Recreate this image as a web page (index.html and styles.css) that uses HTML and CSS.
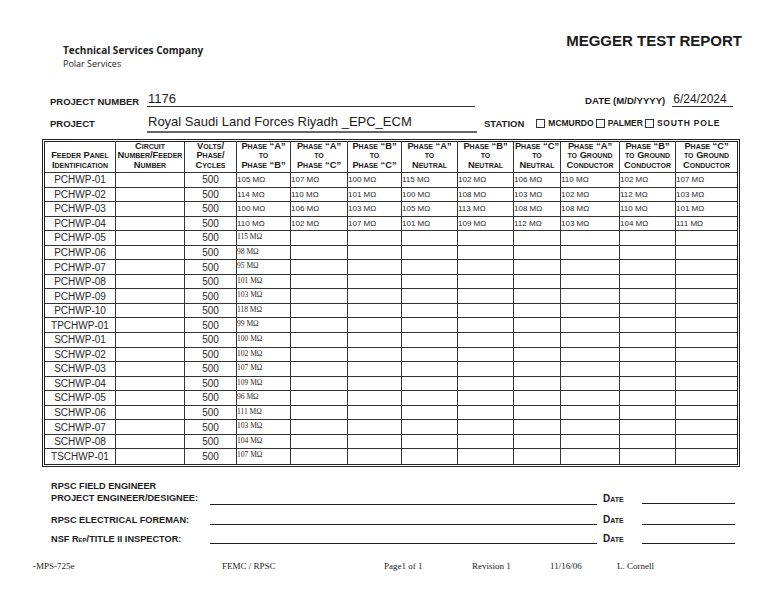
FILE: index.html
```html
<!DOCTYPE html>
<html lang="en">
<head>
<meta charset="utf-8">
<title>Megger Test Report</title>
<link rel="stylesheet" href="styles.css">
</head>
<body>
<div class="page">
  <header class="top">
    <div class="brand">
      <div class="brand-name">Technical Services Company</div>
      <div class="brand-sub">Polar Services</div>
    </div>
    <h1 class="title">MEGGER TEST REPORT</h1>
  </header>

  <section class="meta">
    <div class="meta-row row-number">
      <span class="label lbl-w">PROJECT NUMBER</span>
      <span class="field field-project">1176</span>
      <span class="label date-label">DATE (M/D/YYYY)</span>
      <span class="field field-date">6/24/2024</span>
    </div>
    <div class="meta-row row-project">
      <span class="label lbl-w">PROJECT</span>
      <span class="field field-project">Royal Saudi Land Forces Riyadh _EPC_ECM</span>
      <span class="label station">STATION</span>
      <span class="opt"><span class="box"></span>MCMURDO</span>
      <span class="opt"><span class="box"></span>PALMER</span>
      <span class="opt opt-wide"><span class="box"></span>SOUTH POLE</span>
    </div>
  </section>

  <table class="sheet">
    <thead>
      <tr>
        <th>Feeder Panel<br>Identification</th>
        <th>Circuit<br>Number/Feeder<br>Number</th>
        <th>Volts/<br>Phase/<br>Cycles</th>
        <th>Phase “A”<br>to<br>Phase “B”</th>
        <th>Phase “A”<br>to<br>Phase “C”</th>
        <th>Phase “B”<br>to<br>Phase “C”</th>
        <th>Phase “A”<br>to<br>Neutral</th>
        <th>Phase “B”<br>to<br>Neutral</th>
        <th>Phase “C”<br>to<br>Neutral</th>
        <th>Phase “A”<br>to Ground<br>Conductor</th>
        <th>Phase “B”<br>to Ground<br>Conductor</th>
        <th>Phase “C”<br>to Ground<br>Conductor</th>
      </tr>
    </thead>
    <tbody>
      <tr><td class="name">PCHWP-01</td><td></td><td class="volt">500</td><td class="mo">105 MΩ</td><td class="mo">107 MΩ</td><td class="mo">100 MΩ</td><td class="mo">115 MΩ</td><td class="mo">102 MΩ</td><td class="mo">106 MΩ</td><td class="mo">110 MΩ</td><td class="mo">102 MΩ</td><td class="mo">107 MΩ</td></tr>
      <tr><td class="name">PCHWP-02</td><td></td><td class="volt">500</td><td class="mo">114 MΩ</td><td class="mo">110 MΩ</td><td class="mo">101 MΩ</td><td class="mo">100 MΩ</td><td class="mo">108 MΩ</td><td class="mo">103 MΩ</td><td class="mo">102 MΩ</td><td class="mo">112 MΩ</td><td class="mo">103 MΩ</td></tr>
      <tr><td class="name">PCHWP-03</td><td></td><td class="volt">500</td><td class="mo">100 MΩ</td><td class="mo">106 MΩ</td><td class="mo">103 MΩ</td><td class="mo">105 MΩ</td><td class="mo">113 MΩ</td><td class="mo">108 MΩ</td><td class="mo">108 MΩ</td><td class="mo">110 MΩ</td><td class="mo">101 MΩ</td></tr>
      <tr><td class="name">PCHWP-04</td><td></td><td class="volt">500</td><td class="mo">110 MΩ</td><td class="mo">102 MΩ</td><td class="mo">107 MΩ</td><td class="mo">101 MΩ</td><td class="mo">109 MΩ</td><td class="mo">112 MΩ</td><td class="mo">103 MΩ</td><td class="mo">104 MΩ</td><td class="mo">111 MΩ</td></tr>
      <tr><td class="name">PCHWP-05</td><td></td><td class="volt">500</td><td class="ms">115 MΩ</td><td></td><td></td><td></td><td></td><td></td><td></td><td></td><td></td></tr>
      <tr><td class="name">PCHWP-06</td><td></td><td class="volt">500</td><td class="ms">98 MΩ</td><td></td><td></td><td></td><td></td><td></td><td></td><td></td><td></td></tr>
      <tr><td class="name">PCHWP-07</td><td></td><td class="volt">500</td><td class="ms">95 MΩ</td><td></td><td></td><td></td><td></td><td></td><td></td><td></td><td></td></tr>
      <tr><td class="name">PCHWP-08</td><td></td><td class="volt">500</td><td class="ms">101 MΩ</td><td></td><td></td><td></td><td></td><td></td><td></td><td></td><td></td></tr>
      <tr><td class="name">PCHWP-09</td><td></td><td class="volt">500</td><td class="ms">103 MΩ</td><td></td><td></td><td></td><td></td><td></td><td></td><td></td><td></td></tr>
      <tr><td class="name">PCHWP-10</td><td></td><td class="volt">500</td><td class="ms">118 MΩ</td><td></td><td></td><td></td><td></td><td></td><td></td><td></td><td></td></tr>
      <tr><td class="name">TPCHWP-01</td><td></td><td class="volt">500</td><td class="ms">99 MΩ</td><td></td><td></td><td></td><td></td><td></td><td></td><td></td><td></td></tr>
      <tr><td class="name">SCHWP-01</td><td></td><td class="volt">500</td><td class="ms">100 MΩ</td><td></td><td></td><td></td><td></td><td></td><td></td><td></td><td></td></tr>
      <tr><td class="name">SCHWP-02</td><td></td><td class="volt">500</td><td class="ms">102 MΩ</td><td></td><td></td><td></td><td></td><td></td><td></td><td></td><td></td></tr>
      <tr><td class="name">SCHWP-03</td><td></td><td class="volt">500</td><td class="ms">107 MΩ</td><td></td><td></td><td></td><td></td><td></td><td></td><td></td><td></td></tr>
      <tr><td class="name">SCHWP-04</td><td></td><td class="volt">500</td><td class="ms">109 MΩ</td><td></td><td></td><td></td><td></td><td></td><td></td><td></td><td></td></tr>
      <tr><td class="name">SCHWP-05</td><td></td><td class="volt">500</td><td class="ms">96 MΩ</td><td></td><td></td><td></td><td></td><td></td><td></td><td></td><td></td></tr>
      <tr><td class="name">SCHWP-06</td><td></td><td class="volt">500</td><td class="ms">111 MΩ</td><td></td><td></td><td></td><td></td><td></td><td></td><td></td><td></td></tr>
      <tr><td class="name">SCHWP-07</td><td></td><td class="volt">500</td><td class="ms">103 MΩ</td><td></td><td></td><td></td><td></td><td></td><td></td><td></td><td></td></tr>
      <tr><td class="name">SCHWP-08</td><td></td><td class="volt">500</td><td class="ms">104 MΩ</td><td></td><td></td><td></td><td></td><td></td><td></td><td></td><td></td></tr>
      <tr><td class="name">TSCHWP-01</td><td></td><td class="volt">500</td><td class="ms">107 MΩ</td><td></td><td></td><td></td><td></td><td></td><td></td><td></td><td></td></tr>
    </tbody>
  </table>

  <section class="sign">
    <div class="sign-row row-a">
      <div class="sign-label">RPSC FIELD ENGINEER<br>PROJECT ENGINEER/DESIGNEE:</div>
      <div class="sign-line"></div>
      <div class="sign-date">Date</div>
      <div class="sign-date-line"></div>
    </div>
    <div class="sign-row row-b">
      <div class="sign-label">RPSC ELECTRICAL FOREMAN:</div>
      <div class="sign-line"></div>
      <div class="sign-date">Date</div>
      <div class="sign-date-line"></div>
    </div>
    <div class="sign-row row-c">
      <div class="sign-label">NSF <span class="sc">Rep</span>/TITLE II INSPECTOR:</div>
      <div class="sign-line"></div>
      <div class="sign-date">Date</div>
      <div class="sign-date-line"></div>
    </div>
  </section>

  <footer class="footer">
    <span>-MPS-725e</span>
    <span>FEMC / RPSC</span>
    <span>Page1 of 1</span>
    <span>Revision 1</span>
    <span>11/16/06</span>
    <span>L. Cornell</span>
  </footer>
</div>
</body>
</html>
```

FILE: styles.css
```css
* { box-sizing: border-box; }
html, body { margin: 0; padding: 0; background: #fff; }
body {
  font-family: "Liberation Sans", Arial, sans-serif;
  color: #1c1c1c;
  width: 768px;
  height: 594px;
  overflow: hidden;
}

/* ---- top ---- */
.top {
  display: flex;
  justify-content: space-between;
  align-items: flex-start;
  padding: 33px 26px 0 63px;
}
.brand {
  margin-top: 11px;
  font-family: "Open Sans", sans-serif;
  line-height: 13px;
  color: #1e1e1e;
}
.brand-name { font-size: 10px; font-weight: 700; }
.brand-sub { font-size: 9px; }
.title {
  margin: 0;
  font-size: 15px;
  line-height: 16px;
  font-weight: 700;
  color: #1a1a1a;
}

/* ---- meta ---- */
.meta { margin-top: 17px; padding-left: 50px; }
.meta-row { display: flex; align-items: flex-end; height: 20px; }
.row-project { margin-top: 6px; }
.label {
  font-weight: 700;
  font-size: 9.5px;
  line-height: 11px;
  white-space: nowrap;
}
.lbl-w { width: 97px; }
.row-project .label { margin-bottom: 4px; }
.field {
  font-size: 13px;
  line-height: 15px;
  border-bottom: 1.5px solid #333;
  padding-left: 1px;
  white-space: nowrap;
}
.field-project { width: 328px; }
.row-project .field-project {
  width: 330px;
  border-bottom: 2px solid #666;
  padding-bottom: 2px;
}
.date-label { margin-left: 110px; font-size: 9.6px; margin-bottom: 1.5px; }
.field-date {
  margin-left: 7px;
  width: 61px;
  font-size: 12px;
  line-height: 14px;
}
.station { margin-left: 7px; margin-right: 12px; }
.opt {
  display: flex;
  align-items: center;
  font-weight: 700;
  font-size: 8.5px;
  line-height: 10px;
  margin-right: 2px;
  margin-bottom: 5px;
  white-space: nowrap;
}
.opt-wide { letter-spacing: 0.8px; }
.box {
  width: 9px;
  height: 9px;
  border: 1px solid #333;
  margin-right: 3px;
}

/* ---- table ---- */
.sheet {
  margin: 6px 0 0 42px;
  width: 698px;
  border: 3px double #222;
  border-spacing: 0;
  border-collapse: separate;
  table-layout: fixed;
}
.sheet th, .sheet td {
  border-right: 1px solid #333;
  border-bottom: 1px solid #333;
  padding: 0;
  overflow: hidden;
  white-space: nowrap;
}
.sheet tr > :last-child { border-right: none; }
.sheet tbody tr:last-child td { border-bottom: none; }

.sheet thead tr { height: 31px; }
.sheet th {
  font-size: 9.3px;
  line-height: 9.3px;
  font-weight: 700;
  font-variant: small-caps;
  text-align: center;
  vertical-align: bottom;
  padding-bottom: 2px;
  color: #1a1a1a;
}
.sheet th:nth-child(1) { width: 71px; }
.sheet th:nth-child(2) { width: 69px; }
.sheet th:nth-child(3) { width: 52px; }
.sheet th:nth-child(4) { width: 54px; }
.sheet th:nth-child(5) { width: 57px; }
.sheet th:nth-child(6) { width: 54px; }
.sheet th:nth-child(7) { width: 56px; }
.sheet th:nth-child(8) { width: 56px; }
.sheet th:nth-child(9) { width: 47px; }
.sheet th:nth-child(10) { width: 59px; }
.sheet th:nth-child(11) { width: 56px; }
.sheet th:nth-child(12) { width: 61px; }

.sheet tbody tr { height: 14.55px; }
.sheet td { line-height: 11px; color: #2a2a2a; }
.name, .volt { font-size: 10px; text-align: center; }
.mo { font-size: 8px; padding-left: 1px; }
.ms {
  font-family: "Liberation Serif", "Times New Roman", serif;
  font-size: 7.5px;
  line-height: 9px;
  vertical-align: top;
  padding-left: 1px;
}

/* ---- signatures ---- */
.sign { margin-top: 13px; padding-left: 51px; }
.sign-row { display: flex; align-items: flex-end; }
.row-b { margin-top: 9px; }
.row-c { margin-top: 7px; }
.sign-label {
  width: 159px;
  font-weight: 700;
  font-size: 9.2px;
  line-height: 12px;
  white-space: nowrap;
}
.row-a .sign-label { margin-bottom: 1px; }
.sc { font-variant: small-caps; }
.sign-line { width: 387px; border-bottom: 1.5px solid #222; }
.row-b .sign-line, .row-c .sign-line,
.row-b .sign-date-line, .row-c .sign-date-line { margin-bottom: 1px; }
.sign-date {
  margin-left: 6px;
  width: 39px;
  font-weight: 700;
  font-size: 10px;
  line-height: 12px;
  font-variant: small-caps;
}
.sign-date-line { width: 93px; border-bottom: 1.5px solid #222; margin-bottom: 0.5px; }

/* ---- footer ---- */
.footer {
  margin-top: 16px;
  display: grid;
  grid-template-columns: 189px 162px 88px 78px 67px auto;
  padding-left: 33px;
  font-family: "Liberation Serif", "Times New Roman", serif;
  font-size: 9px;
  line-height: 11px;
  color: #222;
  white-space: nowrap;
}
```
